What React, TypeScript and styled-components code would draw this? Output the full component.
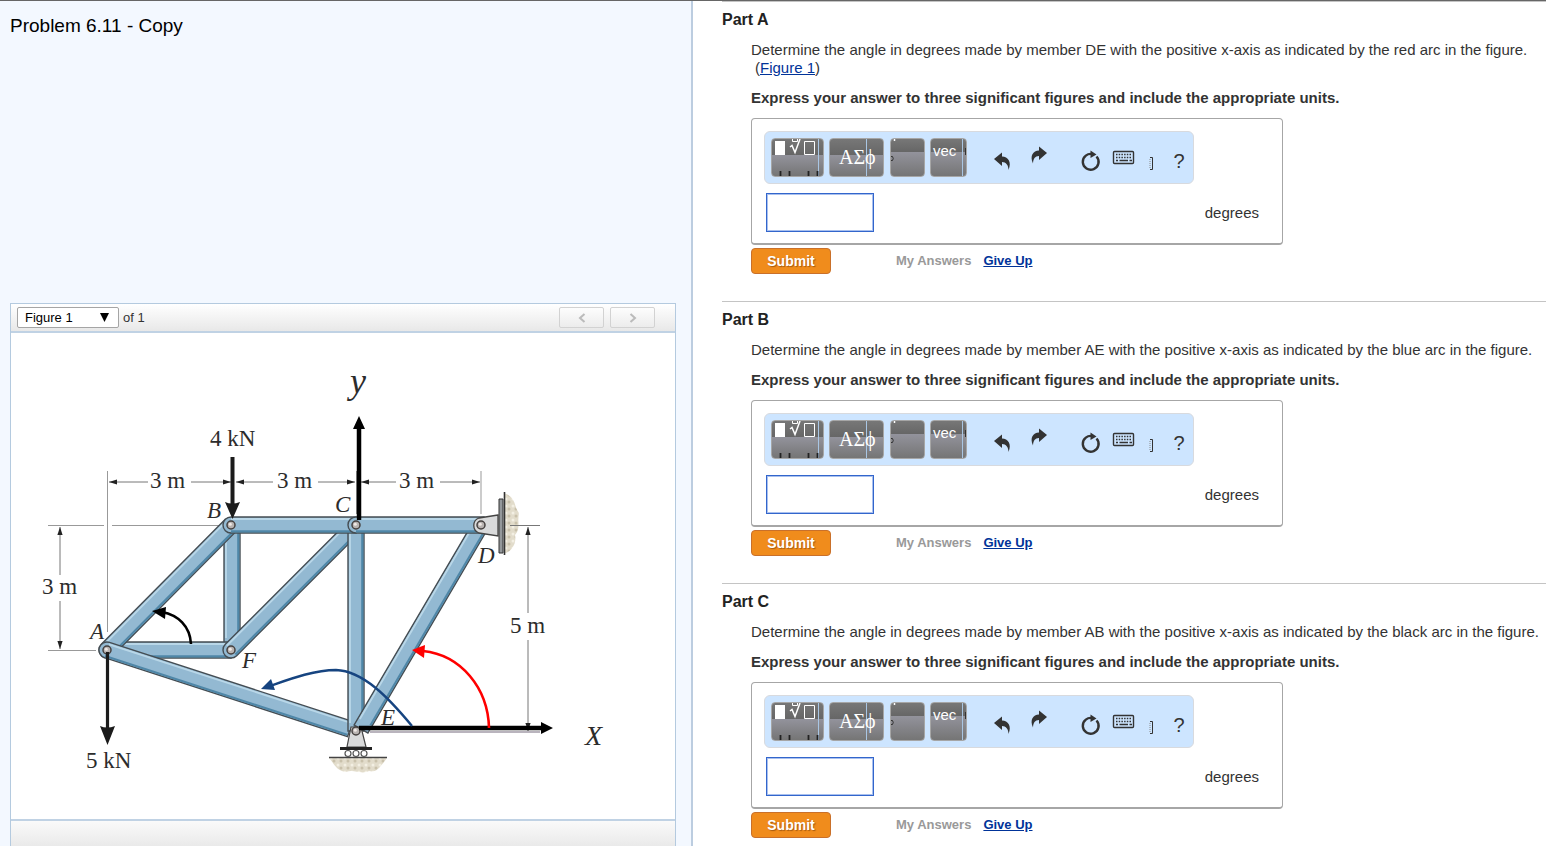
import React from 'react';
import styled, { createGlobalStyle } from 'styled-components';

const GlobalStyle = createGlobalStyle`
  * { box-sizing: border-box; }
  body {
    margin: 0;
    background: #fff;
    color: #333;
    font-family: "Liberation Sans", Arial, sans-serif;
    font-size: 15px;
    line-height: 18px;
  }
`;

const Page = styled.div`
  display: flex;
  min-height: 100vh;
  border-top: 1px solid #666;
`;

const LeftPane = styled.aside`
  display: flex;
  flex-direction: column;
  flex: 0 0 693px;
  padding: 0 15px 0 10px;
  background: #f3f8ff;
  border-right: 2px solid #bccde0;
`;

const ProblemHeader = styled.header`
  height: 302px;
  padding-top: 14px;
`;

const ProblemTitle = styled.h1`
  margin: 0;
  color: #000;
  font-size: 19px;
  font-weight: 400;
  line-height: 22px;
`;

const FigurePanel = styled.section`
  display: flex;
  flex: 1;
  flex-direction: column;
  border: 1px solid #b4cadf;
  border-bottom: 0;
  background: #fff;
`;

const FigureBar = styled.div`
  display: flex;
  align-items: center;
  gap: 6px;
  height: 29px;
  padding: 0 20px 0 6px;
  border-bottom: 2px solid #c0d2e4;
  background: linear-gradient(#fff, #e8e8e8);
  font-size: 13px;
`;

const SelectWrap = styled.span`
  position: relative;
  display: inline-flex;
`;

const FigureSelect = styled.select`
  width: 102px;
  height: 21px;
  padding: 0 7px;
  appearance: none;
  border: 1px solid #a5a5a5;
  border-radius: 2px;
  background: #fff;
  color: #000;
  font: 13px "Liberation Sans", Arial, sans-serif;
`;

const SelectArrow = styled.svg`
  position: absolute;
  top: 6px;
  right: 10px;
  pointer-events: none;
`;

const FigureCount = styled.label`
  flex: 1;
  margin-left: -2px;
`;

const PagerButton = styled.button`
  display: flex;
  align-items: center;
  justify-content: center;
  width: 45px;
  height: 21px;
  padding: 0;
  border: 1px solid #d2d2d2;
  border-radius: 2px;
  background: linear-gradient(#fdfdfd, #ececec);
`;

const FigureCanvas = styled.div`
  height: 488px;
  overflow: hidden;
  border-bottom: 2px solid #c0d2e4;
`;

const FigureFooter = styled.div`
  flex: 1;
  min-height: 26px;
  background: linear-gradient(#fafafa, #e9e9e9);
`;

const Parts = styled.main`
  flex: 1;
  min-width: 0;
  padding-left: 29px;
`;

const PartSection = styled.section`
  padding: 9px 0 27px;
  border-top: 1px solid #c4c4c4;

  &:last-child { padding-bottom: 0; }
`;

const PartTitle = styled.h2`
  margin: 0 0 12px;
  color: #222;
  font-size: 16px;
  line-height: 18px;
`;

const PartBody = styled.div`
  padding-left: 29px;
`;

const Question = styled.p`
  margin: 0 0 12px;
`;

const Instruction = styled.p`
  margin: 0 0 11px;
  font-weight: 700;
`;

const Link = styled.a`
  color: #039;
`;

const FigureLinkLine = styled.span`
  display: block;
  padding-left: 4px;
`;

const AnswerBox = styled.div`
  width: 532px;
  height: 127px;
  padding: 12px;
  border: 1px solid #a6a6a6;
  border-bottom-width: 2px;
  border-radius: 4px;
`;

const Toolbar = styled.div`
  display: flex;
  width: 430px;
  height: 53px;
  padding: 6px;
  border: 1px solid #d8dade;
  border-radius: 6px;
  background: #cde5ff;
`;

const PaletteButton = styled.button<{ $width: number; $split: number; $gap: number }>`
  flex: none;
  width: ${p => p.$width}px;
  height: 39px;
  margin-right: ${p => p.$gap}px;
  padding: 0;
  overflow: hidden;
  border: 1px solid #a6a6a6;
  border-radius: 4px;
  background: linear-gradient(#777 0, #666 ${p => p.$split}px, #93939c ${p => p.$split}px, #757575 100%);

  svg { display: block; }
`;

const IconButton = styled.button<{ $width: number; $gap?: number }>`
  flex: none;
  width: ${p => p.$width}px;
  height: 39px;
  margin-left: ${p => p.$gap ?? 0}px;
  padding: 0;
  border: 0;
  background: none;

  svg { display: block; }
`;

const HelpButton = styled(IconButton)`
  color: #333;
  font: 20px/46px "Liberation Sans", Arial, sans-serif;
`;

const AnswerRow = styled.div`
  display: flex;
  align-items: center;
  justify-content: space-between;
  padding: 9px 11px 0 2px;
`;

const AnswerInput = styled.input`
  width: 108px;
  height: 39px;
  padding: 0 6px;
  border: 1px solid #36c;
  outline: 0;
  box-shadow: inset 0 0 0 1px #a9c0ee;
  font: 15px "Liberation Sans", Arial, sans-serif;
`;

const Actions = styled.div`
  display: flex;
  align-items: center;
  gap: 12px;
  margin-top: 3px;
  font-size: 13px;
  font-weight: 700;
`;

const SubmitButton = styled.button`
  width: 80px;
  height: 26px;
  margin-right: 53px;
  padding: 0;
  border: 1px solid #c9702a;
  border-radius: 4px;
  background: #f08c1c;
  color: #fff;
  font: 700 14px "Liberation Sans", Arial, sans-serif;
  text-shadow: 1px 1px 1px #a55a10;
`;

const MyAnswers = styled.span`
  color: #999;
`;

const DiagramText = styled.text<{ $size?: number; $italic?: boolean }>`
  fill: #2c2c2c;
  font-family: "Liberation Serif", "Times New Roman", serif;
  font-size: ${p => p.$size ?? 23}px;
  font-style: ${p => (p.$italic ? 'italic' : 'normal')};
`;

type Point = [number, number];

/* A bar between two joints: the light edge lies on its upper side. */
function Member({ from, to, round = false }: { from: Point; to: Point; round?: boolean }) {
  const dx = to[0] - from[0];
  const dy = to[1] - from[1];
  const length = Math.hypot(dx, dy);
  const angle = (Math.atan2(dy, dx) * 180) / Math.PI;
  const start = round ? -8 : 0;
  const outline = round
    ? `M${length} -8H0A8 8 0 0 0 0 8H${length}Z`
    : `M0 -8H${length}V8H0Z`;
  return (
    <g transform={`translate(${from[0]} ${from[1]}) rotate(${angle})`}>
      <path d={outline} fill="#93b9d2" stroke="#454d53" strokeWidth="1.4" />
      <path d={`M${start + 8} -6H${length - 1}`} stroke="#b9d7e8" strokeWidth="1.8" />
      <path d={`M${start + 8} 6.3H${length - 1}`} stroke="#4f87a8" strokeWidth="2.2" />
    </g>
  );
}

function Pin({ at }: { at: Point }) {
  return (
    <g>
      <circle cx={at[0]} cy={at[1]} r="4" fill="#b9b4b2" stroke="#45403f" strokeWidth="1.5" />
      <circle cx={at[0] - 0.7} cy={at[1] - 0.7} r="1.5" fill="#f0e9e6" />
    </g>
  );
}

/* A dimension line with its arrowhead at the second point. */
function Dimension({ from, to }: { from: Point; to: Point }) {
  const angle = (Math.atan2(to[1] - from[1], to[0] - from[0]) * 180) / Math.PI;
  return (
    <g>
      <path d={`M${from[0]} ${from[1]}L${to[0]} ${to[1]}`} stroke="#777" />
      <path d="M0 0L-8 -2.6V2.6Z" fill="#222" transform={`translate(${to[0]} ${to[1]}) rotate(${angle})`} />
    </g>
  );
}

function TrussDiagram() {
  const A: Point = [107, 650];
  const B: Point = [231, 525];
  const C: Point = [356, 525];
  const D: Point = [481, 525];
  const E: Point = [356, 731];
  const F: Point = [231, 650];
  return (
    <svg width="664" height="486" viewBox="11 333 664 486" fill="none" role="img" aria-label="Truss diagram">
      <defs>
        <pattern id="ground" width="7" height="7" patternUnits="userSpaceOnUse">
          <rect width="7" height="7" fill="#e2dccb" />
          <circle cx="2" cy="2" r="1.5" fill="#f3efe3" />
          <circle cx="5" cy="5" r="1.5" fill="#c9c1ab" />
        </pattern>
      </defs>

      <path d="M107.500 471V632M48 525.500H104M112 525.500H219M48 650.500H96M481 471V514M356.500 471V514" stroke="#999" />
      <Dimension from={[148, 482]} to={[109, 482]} />
      <Dimension from={[191, 482]} to={[231, 482]} />
      <Dimension from={[273, 482]} to={[236, 482]} />
      <Dimension from={[318, 482]} to={[355, 482]} />
      <Dimension from={[396, 482]} to={[361, 482]} />
      <Dimension from={[440, 482]} to={[480, 482]} />
      <Dimension from={[60, 575]} to={[60, 527]} />
      <Dimension from={[60, 601]} to={[60, 649]} />

      <Member from={[232, 646]} to={[232, 525]} />
      <Member from={[112, 650]} to={F} />
      <Member from={A} to={[231, 525]} round />
      <Member from={F} to={C} round />
      <Member from={A} to={[350, 729]} round />
      <Member from={[356, 731]} to={[356, 525]} />
      <Member from={[361, 729]} to={[479, 528]} />
      <Member from={B} to={C} round />
      <Member from={C} to={[484, 525]} round />

      <path d="M504 493C517 498 513 505 519 513C517 522 521 528 515 535C517 545 510 552 504 554Z" fill="url(#ground)" />
      <path d="M498 515L479 518A8 8 0 0 0 479 533L498 536Z" fill="#d9dadb" stroke="#444" strokeWidth="1.3" />
      <path d="M499 499H503V553H499Z" fill="#94989b" stroke="#333" />
      <path d="M504.500 492V555" stroke="#333" strokeWidth="1.600" />
      <path d="M510 525.500H540" stroke="#777" />
      <Dimension from={[528, 613]} to={[528, 527]} />
      <Dimension from={[528, 640]} to={[528, 731]} />

      <path d="M329 758H387C380 767 377 773 369 771C361 775 354 769 346 772C337 771 335 765 329 758Z" fill="url(#ground)" />
      <path d="M329 757.500H387" stroke="#444" strokeWidth="1.600" />
      <path d="M351 727H361L366 747H347Z" fill="#d9dadb" stroke="#444" strokeWidth="1.200" />
      <path d="M340 748.500H372" stroke="#222" strokeWidth="3" />
      <g fill="#fff" stroke="#555" strokeWidth="1.200">
        <circle cx="348" cy="753.500" r="3" />
        <circle cx="356" cy="753.500" r="3" />
        <circle cx="364" cy="753.500" r="3" />
      </g>

      {[A, B, C, D, E, F].map(p => <Pin key={p.join()} at={p} />)}

      <path d="M232.500 457V506" stroke="#1b1b1b" strokeWidth="4" />
      <path d="M225 502Q232 505 240 502L232.500 519Z" fill="#1b1b1b" />
      <path d="M107.500 652V732" stroke="#1b1b1b" strokeWidth="3.200" />
      <path d="M100 726Q107 729 115 726L107.500 745Z" fill="#1b1b1b" />

      <path d="M370 732H540" stroke="#b9b4bd" strokeWidth="2" />
      <DiagramText x="381" y="725" $italic>E</DiagramText>
      <path d="M359 520V427M359 728H542" stroke="#000" strokeWidth="4.500" />
      <path d="M353 429L359 416L365 429ZM541 722L553 728L541 734Z" fill="#000" />

      <path d="M191 644C190 626 178 615 162 612" stroke="#000" strokeWidth="2.600" />
      <path d="M152 611L166 607L165 619Z" fill="#000" />
      <path d="M412 726C388 697 363 671 336 670C314 670 290 679 270 686" stroke="#164480" strokeWidth="2.400" />
      <path d="M261 689L271 679L275 690Z" fill="#164480" />
      <path d="M489 728C488 688 461 655 423 651" stroke="#f00" strokeWidth="2.600" />
      <path d="M412 650L425 645L424 658Z" fill="#f00" />

      <DiagramText x="210" y="446">4 kN</DiagramText>
      <DiagramText x="86" y="768">5 kN</DiagramText>
      <DiagramText x="150" y="488">3 m</DiagramText>
      <DiagramText x="277" y="488">3 m</DiagramText>
      <DiagramText x="399" y="488">3 m</DiagramText>
      <DiagramText x="42" y="594">3 m</DiagramText>
      <DiagramText x="510" y="633">5 m</DiagramText>
      <DiagramText x="90" y="639" $italic>A</DiagramText>
      <DiagramText x="207" y="518" $italic>B</DiagramText>
      <DiagramText x="335" y="512" $italic>C</DiagramText>
      <DiagramText x="478" y="563" $italic>D</DiagramText>
      <DiagramText x="242" y="668" $italic>F</DiagramText>
      <DiagramText x="350" y="393" $italic $size={36}>y</DiagramText>
      <DiagramText x="585" y="745" $italic $size={28}>X</DiagramText>
    </svg>
  );
}

function TemplatesIcon() {
  return (
    <svg width="51" height="37" viewBox="0 0 51 37" fill="none">
      <path d="M3 2H13V16H3Z" fill="#fff" />
      <path d="M18 8L20 6.500L23 13.500L28 0" stroke="#fff" strokeWidth="1.500" />
      <path d="M20.500 0V2.500H25.500V0" stroke="#fff" />
      <path d="M32.500 2.500H42.500V15.500H32.500Z" stroke="#fff" />
      <path d="M46.500 0V37" stroke="#a9c6e4" />
      <path d="M8.500 32V37M17.500 32V37M36.500 32V37M45.500 32V37" stroke="#222" strokeWidth="1.800" />
    </svg>
  );
}

function GreekIcon() {
  return (
    <svg width="53" height="37" viewBox="0 0 53 37">
      <path d="M36.500 0V37" stroke="#a9c6e4" />
      <text x="9" y="25" fill="#fff" fontFamily="Liberation Serif, serif" fontSize="20">ΑΣϕ</text>
    </svg>
  );
}

function BlankIcon() {
  return (
    <svg width="33" height="37" viewBox="0 0 33 37" fill="none">
      <path d="M3.500 0V2" stroke="#fff" strokeWidth="1.500" />
      <path d="M0 17.500H1.500Q3 19.500 1.500 21.500H0" stroke="#333" />
    </svg>
  );
}

function VectorIcon() {
  return (
    <svg width="35" height="37" viewBox="0 0 35 37">
      <text x="2" y="17" fill="#fff" fontFamily="Liberation Sans, sans-serif" fontSize="15">vec</text>
      <path d="M31.500 0V37" stroke="#a9c6e4" />
      <path d="M34.500 9V16" stroke="#333" />
    </svg>
  );
}

function EquationToolbar() {
  return (
    <Toolbar role="toolbar" aria-label="Equation tools">
      <PaletteButton $width={53} $split={16} $gap={5} aria-label="Templates"><TemplatesIcon /></PaletteButton>
      <PaletteButton $width={55} $split={16} $gap={6} aria-label="Greek symbols"><GreekIcon /></PaletteButton>
      <PaletteButton $width={35} $split={13} $gap={5} aria-label="Symbols"><BlankIcon /></PaletteButton>
      <PaletteButton $width={37} $split={13} $gap={16} aria-label="Vectors"><VectorIcon /></PaletteButton>
      <IconButton $width={38} aria-label="Undo">
        <svg width="38" height="39" viewBox="0 0 38 39" fill="#333">
          <path d="M11 21L19 14.500V18.500C25 18.500 29 24 25.500 32C25.500 27 23 24 19 24V28Z" />
        </svg>
      </IconButton>
      <IconButton $width={38} aria-label="Redo">
        <svg width="38" height="39" viewBox="0 0 38 39" fill="#333">
          <path d="M26 15L18 8.500V12.500C12 12.500 8.500 18 12 25.500C12 21 14 18 18 18V22Z" />
        </svg>
      </IconButton>
      <IconButton $width={30} $gap={17} aria-label="Reset">
        <svg width="30" height="39" viewBox="0 0 30 39" fill="none">
          <path d="M17 16.300A7.900 7.900 0 1 0 20.500 18.500" stroke="#333" strokeWidth="2.400" />
          <path d="M14.500 12.500L20.500 16.500L14.500 20Z" fill="#333" />
        </svg>
      </IconButton>
      <IconButton $width={32} $gap={1} aria-label="Keyboard shortcuts">
        <svg width="32" height="39" viewBox="0 0 32 39" fill="none" stroke="#333">
          <rect x="6.500" y="13.500" width="20" height="12" rx="1" strokeWidth="1.400" />
          <path d="M9 16.500H25M9 19.500H25" strokeWidth="1.600" strokeDasharray="1.500 1.200" />
          <path d="M9 22.500H11M12.500 22.500H21M22.500 22.500H25" strokeWidth="1.600" />
        </svg>
      </IconButton>
      <IconButton $width={20} aria-label="More">
        <svg width="20" height="39" viewBox="0 0 20 39" fill="none">
          <path d="M11 19.500H13.500V31.500H11" stroke="#333" />
          <path d="M11 21V30" stroke="#888" strokeDasharray="1 1" />
        </svg>
      </IconButton>
      <HelpButton $width={24} $gap={8} aria-label="Help">?</HelpButton>
    </Toolbar>
  );
}

interface PartProps {
  letter: string;
  member: string;
  color: string;
  figureLink?: boolean;
}

function Part({ letter, member, color, figureLink }: PartProps) {
  return (
    <PartSection>
      <PartTitle>Part {letter}</PartTitle>
      <PartBody>
        <Question>
          Determine the angle in degrees made by member {member} with the positive x-axis as indicated by the {color} arc in the figure.
          {figureLink && <FigureLinkLine>(<Link href="#figure">Figure 1</Link>)</FigureLinkLine>}
        </Question>
        <Instruction>Express your answer to three significant figures and include the appropriate units.</Instruction>
        <AnswerBox>
          <EquationToolbar />
          <AnswerRow>
            <AnswerInput id={`answer-${letter}`} type="text" />
            <label htmlFor={`answer-${letter}`}>degrees</label>
          </AnswerRow>
        </AnswerBox>
        <Actions>
          <SubmitButton>Submit</SubmitButton>
          <MyAnswers>My Answers</MyAnswers>
          <Link href="#give-up">Give Up</Link>
        </Actions>
      </PartBody>
    </PartSection>
  );
}

export default function App() {
  return (
    <>
      <GlobalStyle />
      <Page>
        <LeftPane>
          <ProblemHeader>
            <ProblemTitle>Problem 6.11 - Copy</ProblemTitle>
          </ProblemHeader>
          <FigurePanel id="figure">
            <FigureBar>
              <SelectWrap>
                <FigureSelect id="figure-select">
                  <option>Figure 1</option>
                </FigureSelect>
                <SelectArrow width="9" height="9" viewBox="0 0 9 9"><path d="M0 0H9L4.500 9Z" /></SelectArrow>
              </SelectWrap>
              <FigureCount htmlFor="figure-select">of 1</FigureCount>
              <PagerButton aria-label="Previous figure">
                <svg width="8" height="10" viewBox="0 0 8 10" fill="none" stroke="#bbb" strokeWidth="2"><path d="M6.500 1L2 5L6.500 9" /></svg>
              </PagerButton>
              <PagerButton aria-label="Next figure">
                <svg width="8" height="10" viewBox="0 0 8 10" fill="none" stroke="#bbb" strokeWidth="2"><path d="M1.500 1L6 5L1.500 9" /></svg>
              </PagerButton>
            </FigureBar>
            <FigureCanvas><TrussDiagram /></FigureCanvas>
            <FigureFooter />
          </FigurePanel>
        </LeftPane>
        <Parts>
          <Part letter="A" member="DE" color="red" figureLink />
          <Part letter="B" member="AE" color="blue" />
          <Part letter="C" member="AB" color="black" />
        </Parts>
      </Page>
    </>
  );
}
